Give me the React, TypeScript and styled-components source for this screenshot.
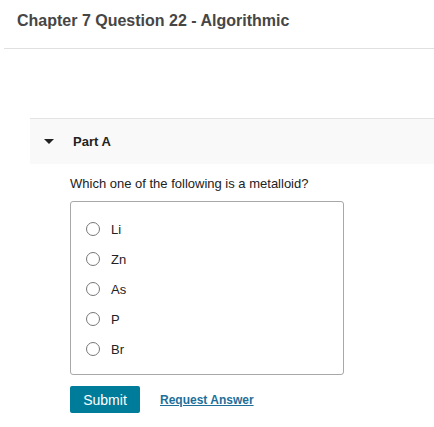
import { createGlobalStyle } from 'styled-components';
import styled from 'styled-components';

const GlobalStyle = createGlobalStyle`
  html, body {
    margin: 0;
    padding: 0;
    background: #fff;
    font-family: "Liberation Sans", Arial, sans-serif;
  }
`

const options = ['Li', 'Zn', 'As', 'P', 'Br']

export default function App() {
  return (
    <>
      <GlobalStyle />
      <Page>
        <TitleBar>
          <Title>Chapter 7 Question 22 - Algorithmic</Title>
        </TitleBar>
        <PartSection>
          <PartHeader>
            <Caret />
            <PartTitle>Part A</PartTitle>
          </PartHeader>
          <PartBody>
            <Question>Which one of the following is a metalloid?</Question>
            <OptionBox>
              {options.map((o) => (
                <OptionRow key={o}>
                  <Radio />
                  <OptionLabel>{o}</OptionLabel>
                </OptionRow>
              ))}
            </OptionBox>
            <Actions>
              <SubmitButton>Submit</SubmitButton>
              <RequestLink href="#">Request Answer</RequestLink>
            </Actions>
          </PartBody>
        </PartSection>
      </Page>
    </>
  )
}

const Page = styled.div`
  width: 434px;
  height: 427px;
  overflow: hidden;
`
const TitleBar = styled.div`
  margin-left: 4px;
  padding: 11px 0 0 13px;
  height: 49px;
  box-sizing: border-box;
  border-bottom: 1px solid #e0e0e0;
`
const Title = styled.h1`
  margin: 0;
  font-size: 16px;
  line-height: 20px;
  font-weight: bold;
  color: #464646;
`
const PartSection = styled.div`
  margin: 69px 0 0 30px;
`
const PartHeader = styled.div`
  display: flex;
  align-items: center;
  height: 46px;
  box-sizing: border-box;
  border-top: 1px solid #e3e3e3;
  background: #f9f9f9;
  padding-left: 14px;
`
const Caret = styled.span`
  width: 0;
  height: 0;
  border-left: 5px solid transparent;
  border-right: 5px solid transparent;
  border-top: 5px solid #222;
  margin-right: 19px;
`
const PartTitle = styled.span`
  font-size: 13px;
  font-weight: bold;
  color: #222;
`
const PartBody = styled.div`
  padding: 12px 0 0 40px;
`
const Question = styled.div`
  font-size: 13px;
  line-height: 16px;
  color: #222;
`
const OptionBox = styled.div`
  margin-top: 9px;
  width: 274px;
  height: 174px;
  box-sizing: border-box;
  border: 1px solid #a8a8a8;
  border-radius: 3px;
  padding: 12px 0 0 15px;
`
const OptionRow = styled.div`
  display: flex;
  align-items: center;
  height: 30px;
`
const Radio = styled.span`
  display: block;
  flex: none;
  width: 14px;
  height: 14px;
  margin-right: 11px;
  border: 1px solid #777;
  border-radius: 50%;
  background: #fff;
  box-sizing: border-box;
`
const OptionLabel = styled.span`
  font-size: 13px;
  color: #222;
`
const Actions = styled.div`
  display: flex;
  align-items: center;
  gap: 20px;
  margin-top: 11px;
`
const SubmitButton = styled.button`
  width: 70px;
  height: 27px;
  border: none;
  border-radius: 2px;
  background: #007c9b;
  color: #fff;
  font-family: "Liberation Sans", Arial, sans-serif;
  font-size: 14px;
  padding: 0;
`
const RequestLink = styled.a`
  font-size: 12px;
  font-weight: bold;
  color: #1d6f9a;
  text-decoration: underline;
`
